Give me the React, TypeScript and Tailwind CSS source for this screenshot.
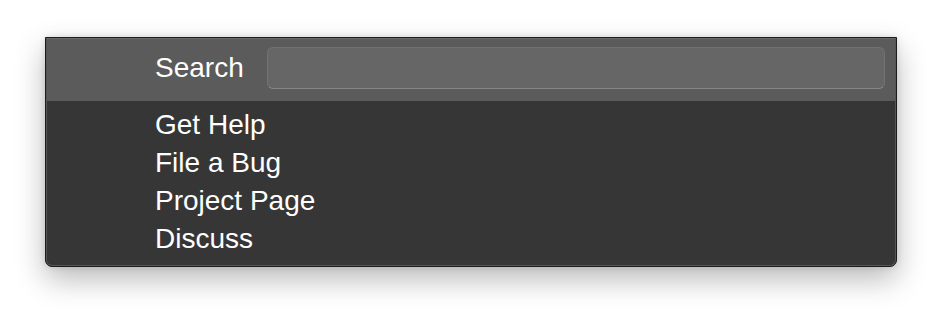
const items = ["Get Help", "File a Bug", "Project Page", "Discuss"];

export default function App() {
  return (
    <div className="w-[942px] h-[320px] bg-white pt-[37px] pl-[45px]" style={{ fontFamily: '"Liberation Sans", Arial, sans-serif' }}>
      <div className="w-[852px] h-[230px] bg-[#363636] border border-[#1c1c1c] rounded-b-[7px] shadow-[0_12px_30px_rgba(0,0,0,0.28),0_0_6px_rgba(0,0,0,0.12)] overflow-hidden">
        <div className="h-full rounded-b-[6px] border-x border-b border-[#555] border-t border-t-[#6a6a6a] flex flex-col">
          {/* search bar */}
          <div className="h-[62px] bg-[#5b5b5b] flex items-center pl-[108px] pr-[10px] pb-[4px]">
            <span className="text-white text-[28px] leading-none w-[112px] shrink-0">Search</span>
            <div className="flex-1 h-[42px] rounded-[6px] bg-[#666666] border border-[#727272] border-b-[#858585]" />
          </div>
          {/* menu items */}
          <div className="flex flex-col pl-[108px] pt-[5px]">
            {items.map((label) => (
              <div key={label} className="h-[38px] flex items-center text-white text-[28px] leading-none">
                {label}
              </div>
            ))}
          </div>
        </div>
      </div>
    </div>
  );
}
